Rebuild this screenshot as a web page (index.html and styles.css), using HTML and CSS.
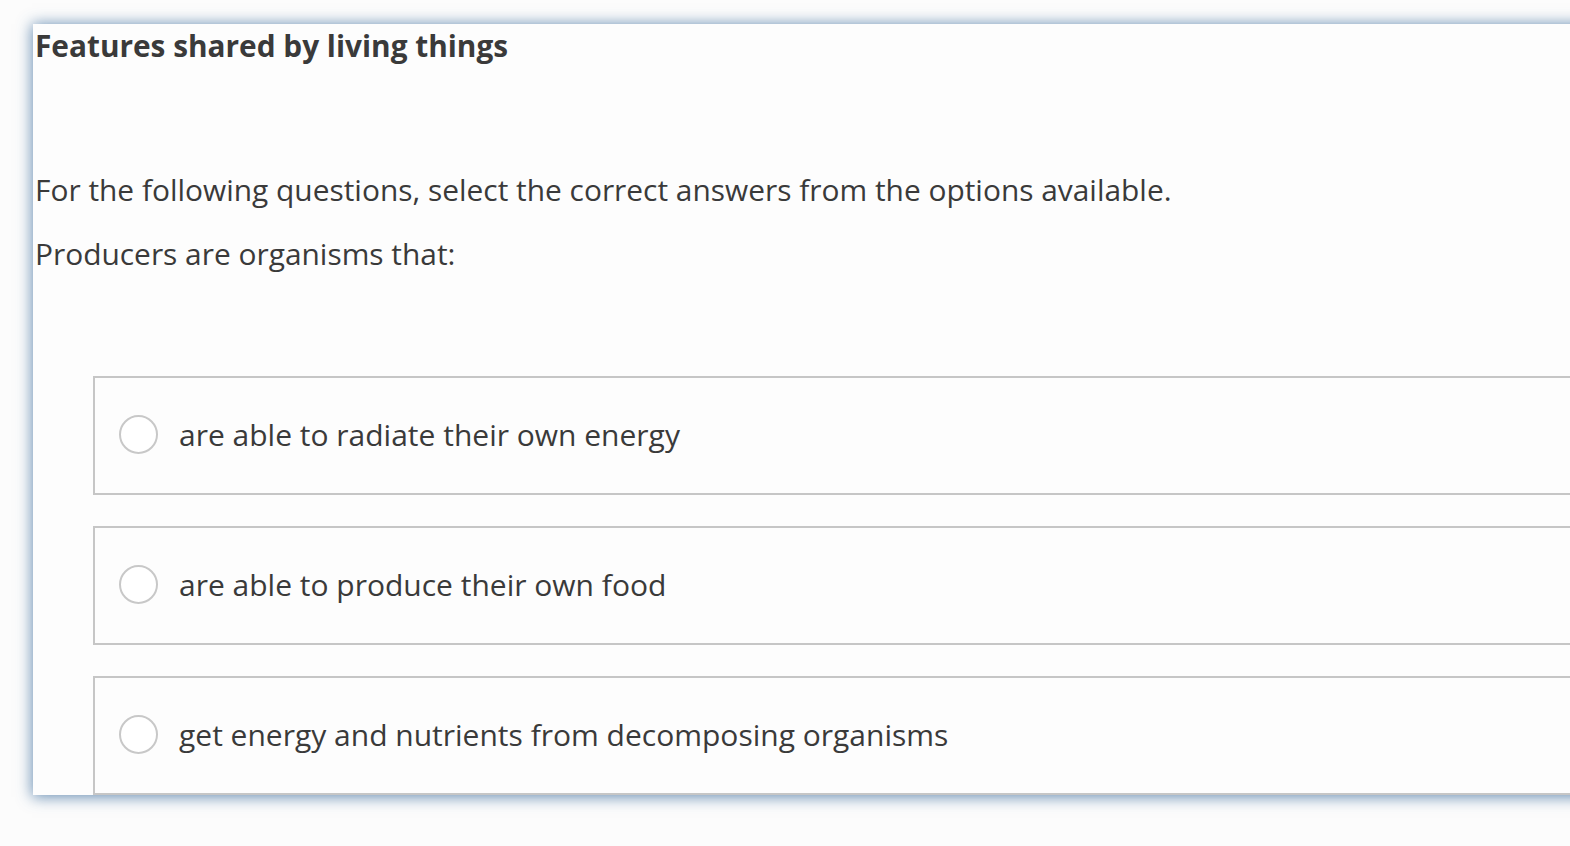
FILE: index.html
```html
<!DOCTYPE html>
<html lang="en">
<head>
    <meta charset="UTF-8">
    <title>Features shared by living things</title>
    <link rel="stylesheet" href="styles.css">
</head>
<body>
    <div class="panel">
        <h2 class="title">Features shared by living things</h2>
        <p class="intro">For the following questions, select the correct answers from the options available.</p>
        <p class="question">Producers are organisms that:</p>
        <div class="options">
            <label class="option">
                <span class="radio"></span>
                <span class="option-text">are able to radiate their own energy</span>
            </label>
            <label class="option">
                <span class="radio"></span>
                <span class="option-text">are able to produce their own food</span>
            </label>
            <label class="option">
                <span class="radio"></span>
                <span class="option-text">get energy and nutrients from decomposing organisms</span>
            </label>
        </div>
    </div>
</body>
</html>
```

FILE: styles.css
```css
body {
    font-family: "Open Sans", "DejaVu Sans", sans-serif;
    background-color: #fcfcfc;
    color: #3a3a3a;
    margin: 0;
    padding: 24px 0 0 33px;
    overflow: hidden;
    height: 846px;
    box-sizing: border-box;
}
.panel {
    width: 1600px;
    height: 771px;
    background-color: #fdfdfd;
    box-shadow: 0 1px 14px 1px rgba(55, 105, 155, 0.75);
    overflow: hidden;
    padding-left: 2px;
    box-sizing: border-box;
}
.title {
    font-size: 29.8px;
    font-weight: 700;
    margin: 0;
    padding-top: 4px;
    line-height: 36px;
    color: #3a3a3a;
}
.intro {
    font-size: 29.9px;
    margin: 106px 0 0;
    line-height: 40px;
}
.question {
    font-size: 29.9px;
    margin: 24px 0 0;
    line-height: 40px;
}
.options {
    margin: 102px 0 0 58px;
    display: flex;
    flex-direction: column;
    gap: 31px;
}
.option {
    display: flex;
    align-items: center;
    height: 119px;
    border: 2px solid #c6c6c6;
    box-sizing: border-box;
    padding: 0 0 3px 24px;
    background-color: #fdfdfd;
}
.radio {
    width: 39px;
    height: 39px;
    border: 2px solid #c8c8c8;
    border-radius: 50%;
    box-sizing: border-box;
    background-color: #fff;
    flex-shrink: 0;
}
.option-text {
    font-size: 30px;
    margin-left: 21px;
    color: #3a3a3a;
}
```
